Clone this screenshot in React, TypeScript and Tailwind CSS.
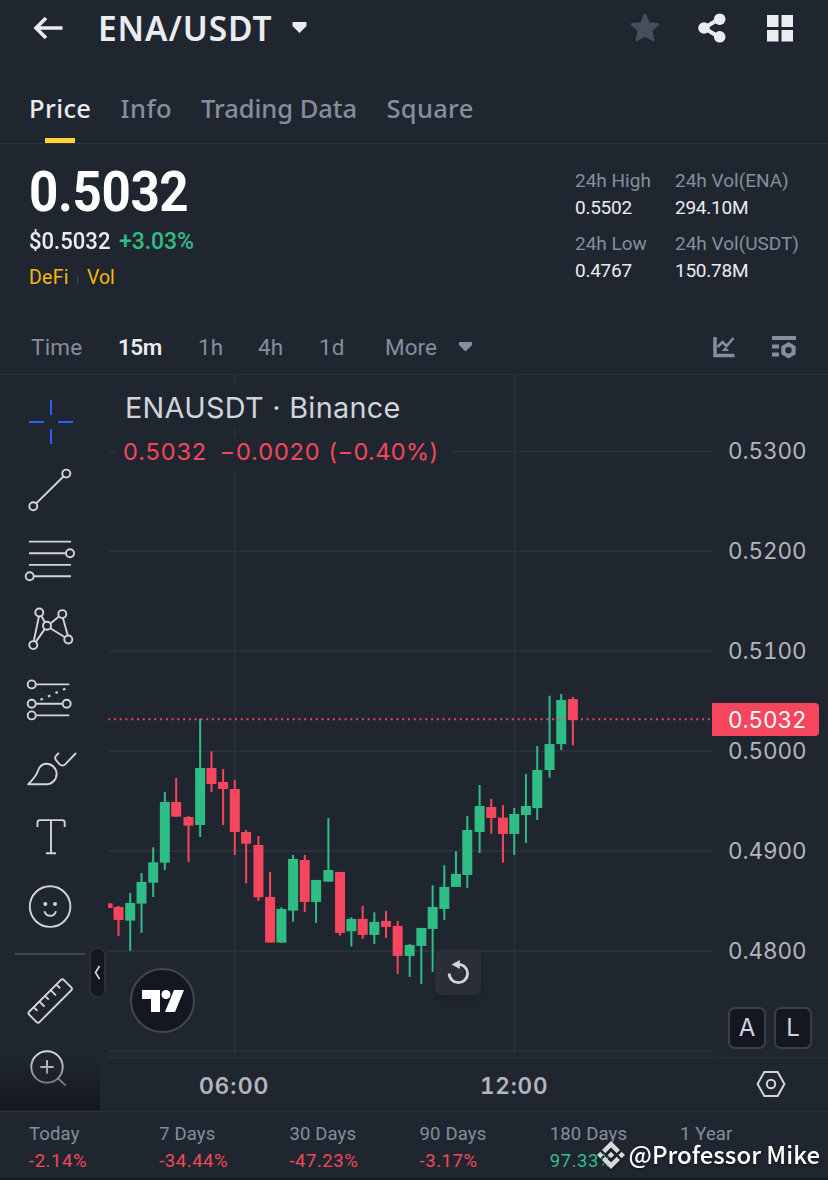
import React from 'react';
import clsx from 'clsx';

const UP = '#2ebd85';
const DOWN = '#f6465d';

const TABS = [
  { label: 'Price', width: 'w-[91.5px]', spacing: 'tracking-[0.4px]' },
  { label: 'Info', width: 'w-[80.5px]', spacing: 'tracking-[0.5px]' },
  { label: 'Trading Data', width: 'w-[185.5px]', spacing: 'tracking-[-0.05px]' },
  { label: 'Square', width: 'w-[100px]', spacing: 'tracking-[0.3px]' },
];

const STATS = [
  { label: '24h High', value: '0.5502' },
  { label: '24h Vol(ENA)', value: '294.10M' },
  { label: '24h Low', value: '0.4767' },
  { label: '24h Vol(USDT)', value: '150.78M' },
];

const INTERVALS = [
  { label: 'Time', width: 'w-[87px]' },
  { label: '15m', width: 'w-[80px]' },
  { label: '1h', width: 'w-[60px]' },
  { label: '4h', width: 'w-[61px]' },
  { label: '1d', width: 'w-[66px]' },
];

const PRICES = ['0.5300', '0.5200', '0.5100', '0.5000', '0.4900', '0.4800'];

const PERFORMANCE = [
  { label: 'Today', value: '-2.14%' },
  { label: '7 Days', value: '-34.44%' },
  { label: '30 Days', value: '-47.23%' },
  { label: '90 Days', value: '-3.17%' },
  { label: '180 Days', value: '97.33%' },
  { label: '1 Year', value: '--' },
];

// [center, high, body top, body bottom, low, rising], in thirds of a pixel
const CANDLES: [number, number, number, number, number, number][] = [
  [22, 640, 640, 654, 654, 0],
  [55, 648, 651, 690, 738, 0],
  [90, 609, 639, 692, 783, 1],
  [124, 549, 576, 641, 729, 1],
  [159, 472, 517, 578, 621, 1],
  [194, 306, 336, 518, 540, 1],
  [228, 264, 336, 380, 380, 0],
  [265, 378, 381, 407, 516, 0],
  [300, 86, 234, 405, 441, 1],
  [334, 184, 234, 282, 306, 0],
  [369, 237, 276, 297, 405, 0],
  [404, 270, 297, 426, 495, 0],
  [438, 420, 426, 461, 580, 0],
  [475, 438, 465, 622, 633, 0],
  [510, 546, 621, 758, 758, 0],
  [544, 652, 657, 758, 759, 1],
  [579, 495, 507, 662, 695, 1],
  [614, 495, 510, 636, 666, 0],
  [648, 570, 570, 636, 699, 1],
  [685, 384, 540, 575, 575, 1],
  [720, 546, 546, 729, 737, 0],
  [754, 682, 687, 724, 770, 1],
  [788, 648, 687, 735, 747, 0],
  [823, 667, 696, 735, 762, 1],
  [858, 663, 693, 711, 744, 0],
  [893, 693, 708, 798, 852, 0],
  [929, 762, 765, 798, 861, 1],
  [964, 714, 714, 768, 882, 1],
  [998, 586, 651, 717, 846, 1],
  [1033, 526, 591, 657, 690, 1],
  [1068, 484, 552, 591, 591, 1],
  [1102, 378, 420, 555, 594, 1],
  [1139, 285, 348, 426, 489, 1],
  [1174, 327, 351, 384, 431, 0],
  [1209, 345, 383, 432, 518, 0],
  [1243, 354, 372, 432, 495, 1],
  [1278, 252, 348, 375, 459, 1],
  [1312, 168, 240, 354, 390, 1],
  [1349, 17, 162, 240, 263, 1],
  [1384, 12, 30, 162, 180, 1],
  [1419, 21, 27, 90, 166, 0],
];

function Tool({ children, className }: { children: React.ReactNode; className?: string }) {
  return (
    <button className={clsx('flex h-[69.4px] w-full shrink-0 items-center pl-[23px]', className)}>
      <svg width="54" height="54" viewBox="0 0 54 54" fill="none" stroke="#d1d4dc" strokeWidth="1.9" strokeLinejoin="round">
        {children}
      </svg>
    </button>
  );
}

function Toolbar() {
  return (
    <aside className="relative h-[735px] w-[100px] shrink-0 overflow-hidden pt-[12.4px]">
      <Tool>
        <path stroke="#2962ff" d="M28 5v15M28 34v15M6 27h15M35 27h15" />
      </Tool>
      <Tool>
        <path d="M13.2 39.4 40.4 12.5" />
        <circle cx="10.3" cy="42.3" r="4" />
        <circle cx="43.3" cy="9.6" r="4" />
      </Tool>
      <Tool>
        <path d="M6 7.6h42M6 19.2h37M6 30.9h42M10.7 42.3H48" />
        <circle cx="47" cy="19.2" r="4" />
        <circle cx="6.7" cy="42.3" r="4" />
      </Tool>
      <Tool>
        <path d="M15.9 13.5 10.8 38.1M18.4 13l3.5 6.3M12.8 38.9l8.9-12.8M27.4 20.5l8.5-7M27.3 25.2l14.6 9M39.9 15.1l4.9 17.4" />
        <circle cx="16.3" cy="9.5" r="4" />
        <circle cx="39.3" cy="11.1" r="4" />
        <circle cx="24" cy="22.8" r="4" />
        <circle cx="10.3" cy="42.1" r="4" />
        <circle cx="45.3" cy="36.5" r="4" />
      </Tool>
      <Tool>
        <path d="M12.7 11.4h33.6M12.7 30.7h27M12.7 42.4h33.6" />
        <path d="M17.5 26.8 42.8 15.5" strokeWidth="2.2" strokeDasharray="2.6 5.6" />
        <circle cx="8.7" cy="11.4" r="4" />
        <circle cx="8.7" cy="30.7" r="4" />
        <circle cx="43.7" cy="30.7" r="4" />
        <circle cx="8.7" cy="42.4" r="4" />
      </Tool>
      <Tool>
        <path d="M5.2 42.3H23.3A10.3 10.3 0 0 0 23.3 21.7C17.8 21.7 16 25.5 14.8 29.2 13 34.5 9.2 38 5.2 42.3Z" />
        <path d="m35.9 11-2.4 2.2c-1.6 1.7-1.6 3.8-.1 5.5l3.3 3.6c1.6 1.6 3.9 1.6 5.5 0L53 11" />
      </Tool>
      <Tool>
        <path d="M14.5 16v-4.4q0-2.5 2.5-2.5h22.2q2.5 0 2.5 2.5V16M28 9v33M23 42.2h10" />
      </Tool>
      <Tool>
        <circle cx="27.1" cy="25.6" r="20.3" />
        <circle cx="22.3" cy="23" r="2" fill="#d1d4dc" stroke="none" />
        <circle cx="32" cy="23" r="2" fill="#d1d4dc" stroke="none" />
        <path d="M21.4 30.2c1 3 3 4.6 5.8 4.6s4.8-1.6 5.8-4.6" />
      </Tool>
      <div className="mt-[10px] ml-[15px] h-[2px] w-[70px] bg-[#434651]" />
      <Tool className="mt-[11.5px]">
        <g transform="translate(27.2 27) rotate(-45)">
          <rect x="-24.5" y="-7.3" width="49" height="14.6" rx="2" />
          <path d="M-16-7v5M-8-7v7M0-7v5M8-7v7M16-7v5" />
        </g>
      </Tool>
      <Tool>
        <circle cx="24" cy="24" r="15.7" />
        <path d="M24 17.3v13.4M17.3 24h13.4M35.3 35.6l7.5 7" />
      </Tool>
      <div className="absolute inset-x-0 bottom-0 h-[52px] bg-linear-to-b from-transparent to-[#131722]" />
    </aside>
  );
}

function Plot() {
  return (
    <svg width="612" height="682" viewBox="100 375 612 682" className="block">
      <path
        d="M108 551.5h604M108 651.5h604M108 751.5h604M108 851.5h604M108 951.5h604M108 1051.5h604M108 451.5h8M451 451.5h261M234.5 375v10M234.5 429v8M234.5 470v586M514.5 375v681"
        stroke="#2c323c"
        strokeWidth="1.6"
        fill="none"
      />
      <svg x="108" y="375" width="604" height="681" viewBox="108 375 604 681">
        <g transform="translate(100 690.3) scale(0.33333)">
          {CANDLES.map(([x, high, top, bottom, low, rising]) => (
            <g key={x} fill={rising ? UP : DOWN}>
              <rect x={x - 3} y={high} width="6" height={low - high} />
              <rect x={x - 15} y={top} width="30" height={bottom - top} />
            </g>
          ))}
        </g>
        <path d="M108 719.5h604" stroke={DOWN} strokeWidth="1.8" strokeDasharray="1.9 3.87" />
      </svg>
    </svg>
  );
}

function Header() {
  return (
    <header className="flex h-[56px] items-center pl-[33px] pr-[34px]">
      <svg width="30" height="24" viewBox="0 0 30 24" fill="none" stroke="#eaecef" strokeWidth="3.6">
        <path d="M2.5 12H29.5M13 2 3 12l10 10" />
      </svg>
      <h1 className="ml-[35px] mt-[2px] w-[194px] whitespace-nowrap font-['Noto_Sans'] text-[33.5px] font-semibold leading-none tracking-[0.9px] text-[#eaecef]">
        ENA/USDT
      </h1>
      <svg width="15" height="12" viewBox="0 0 15 12" fill="#eaecef">
        <path d="M.5 0h14v4L7.5 11 .5 4z" />
      </svg>
      <div className="ml-auto flex items-center">
        <svg width="30" height="30" viewBox="0 0 30 30" fill="#474f5b" stroke="#474f5b" strokeWidth="2.5" strokeLinejoin="round">
          <path d="m15 2 3.6 8.5 9.4.8-7 6 2.2 9.700-8.200-4.800L6.800 27 9 17.300l-7-6 9.400-.8z" />
        </svg>
        <svg className="ml-[37px]" width="30" height="30" viewBox="0 0 30 30" fill="#eaecef">
          <path d="M22 6 7 15l15 9" fill="none" stroke="#eaecef" strokeWidth="4" />
          <circle cx="22.7" cy="6.2" r="5.8" />
          <circle cx="7" cy="15" r="5.8" />
          <circle cx="22.7" cy="23.8" r="5.8" />
        </svg>
        <svg className="ml-[39px]" width="28" height="28" viewBox="0 0 28 28" fill="#eaecef">
          <path d="M1 1h11.5v12H1zM15.5 1H27v12H15.5zM1 16h11.5v11.5H1zM15.5 16H27v11.5H15.5z" />
        </svg>
      </div>
    </header>
  );
}

export default function App() {
  return (
    <main className="flex h-[1180px] w-[828px] flex-col overflow-hidden bg-[#202630] font-['Roboto',sans-serif] text-[#eaecef]">
      <Header />

      <nav className="flex h-[88px] border-b border-[#2c333e] pl-[29px] font-['Noto_Sans',sans-serif] text-[25.5px] font-medium leading-none text-[#848e9c]">
        {TABS.map((tab, i) => (
          <div key={tab.label} className={clsx('relative shrink-0 whitespace-nowrap pt-[39.5px]', tab.width, tab.spacing, i === 0 && 'text-[#eaecef]')}>
            {tab.label}
            {i === 0 && <span className="absolute bottom-0 left-[16px] h-[5px] w-[30px] bg-[#fcd535]" />}
          </div>
        ))}
      </nav>

      <section className="flex h-[176px] shrink-0 justify-between pl-[29px] pt-[20px]">
        <div>
          <div className="h-[58px] w-[170px] origin-left scale-x-[0.93] text-[55px] font-bold leading-[56px] tracking-[-0.4px] text-white">0.5032</div>
          <div className="mt-[6px] flex gap-[9px] text-[23px] font-medium leading-[28px]">
            <span className="w-[81px] origin-left scale-x-[0.96]">$0.5032</span>
            <span className="tracking-[-0.1px] text-[#2ebd85]">+3.03%</span>
          </div>
          <div className="mt-[9px] flex items-center text-[19.5px] leading-[26px] text-[#f0b90b]">
            <span className="w-[48px] tracking-[0.3px]">DeFi</span>
            <span className="mr-[9px] mt-1 h-2 w-px bg-[#474d57]" />
            <span>Vol</span>
          </div>
        </div>
        <dl className="mt-[3.5px] grid h-[127px] w-[253px] grid-cols-[100px_1fr] grid-rows-2">
          {STATS.map((stat) => (
            <div key={stat.label} className="whitespace-nowrap">
              <dt className="text-[19px] leading-[26px] text-[#848e9c]">{stat.label}</dt>
              <dd className="text-[19px] leading-[28px] tracking-[-0.25px]">{stat.value}</dd>
            </div>
          ))}
        </dl>
      </section>

      <section className="flex h-[55px] shrink-0 items-center border-b border-[#2c333e] pl-[31px] pr-[32px] text-[22.5px] text-[#848e9c]">
        {INTERVALS.map(({ label, width }) => (
          <span key={label} className={clsx('pt-[2px]', width, label === '15m' ? 'font-semibold tracking-[-0.5px] text-[#eaecef]' : 'tracking-[0.2px]')}>
            {label}
          </span>
        ))}
        <span className="w-[74px] pt-[2px]">More</span>
        <svg width="13" height="10" viewBox="0 0 13 10" fill="#848e9c">
          <path d="M0 0h13v3L6.5 9.5 0 3z" />
        </svg>
        <svg className="ml-auto" width="22" height="22" viewBox="0 0 22 22" fill="none" stroke="#848e9c">
          <path d="M2 1v18.5h19.5" strokeWidth="3.6" />
          <path d="m4.5 11 5-5 4 4L20.5 2" strokeWidth="2.6" />
          <path d="m8.5 15 4-4 3.5 4z" fill="#848e9c" stroke="none" />
        </svg>
        <svg className="ml-[37px]" width="24" height="24" viewBox="0 0 24 24" fill="#848e9c">
          <path d="M0 1h24v4H0zM0 9.5h7v4H0zM0 17.5h7v4H0z" />
          <path fillRule="evenodd" d="m16.5 7 7.2 4.2v8.1L16.5 23.5l-7.200-4.200v-8.100zM16.500 12a3.200 3.200 0 1 0 0 6.400 3.200 3.200 0 0 0 0-6.400z" />
        </svg>
      </section>

      <section className="relative flex h-[736.5px] shrink-0 border-b border-[#2c323c]">
        <Toolbar />
        <div className="flex w-[612px] flex-col">
          <Plot />
          <div className="ml-[8px] flex h-[54px] items-center border-t border-[#2c323c] pt-[4px] font-['Inter',sans-serif] text-[22.5px] font-semibold leading-none tracking-[0.8px] text-[#b2b5be]">
            <span className="ml-[91px] w-[281px]">06:00</span>
            <span className="tabular-nums">12:00</span>
          </div>
        </div>
        <div className="flex flex-1 flex-col font-['Inter',sans-serif] text-[22.5px] tabular-nums tracking-[-0.1px] text-[#b2b5be]">
          <div className="h-[26px] shrink-0" />
          {PRICES.map((price) => (
            <span key={price} className="flex h-[100px] shrink-0 items-center pl-[16px]">
              {price}
            </span>
          ))}
          <div className="mt-[6px] flex gap-[8px] pl-[16px] text-[24px] tracking-normal text-[#d1d4dc]">
            <button className="h-[42px] w-[38px] rounded-[7px] border-2 border-[#3a3e49] bg-[#131722]">A</button>
            <button className="h-[42px] w-[38px] rounded-[7px] border-2 border-[#3a3e49] bg-[#131722]">L</button>
          </div>
          <div className="ml-[2px] mt-[8px] flex h-[54px] items-center border-t border-[#2c323c] pl-[42px]">
            <svg width="30" height="28" viewBox="0 0 30 28" fill="none" stroke="#d1d4dc" strokeWidth="2">
              <path d="M8.3 2h13.4l6.7 12-6.7 12H8.300L1.600 14z" />
              <circle cx="15" cy="14" r="4.2" />
            </svg>
          </div>
        </div>

        <div className="absolute left-[125px] top-[16px] font-['Inter',sans-serif]">
          <div className="whitespace-nowrap text-[28.8px] leading-[34px] tracking-[0.3px] text-[#d1d4dc]">ENAUSDT · Binance</div>
          <div className="-ml-[2px] mt-[10px] flex whitespace-nowrap text-[23.5px] leading-[33px] tracking-[0.65px] text-[#f6465d]">
            <span className="w-[96.5px] tracking-[0.9px]">0.5032</span>
            <span className="w-[109px] tracking-[0.9px]">−0.0020</span>
            <span className="tracking-[0.4px]">(−0.40%)</span>
          </div>
        </div>
        <div className="absolute left-[712px] top-[328px] flex h-[33px] w-[107px] items-center rounded-r-[4px] bg-[#f6465d] pl-[16px] font-['Inter',sans-serif] text-[22.5px] tabular-nums tracking-[-0.1px] text-white">
          0.5032
        </div>
        <button className="absolute left-[89px] top-[572px] flex h-[51px] w-[17px] items-center justify-center rounded-[8px] border-2 border-[#2a2e39] bg-[#131722]">
          <svg width="7" height="15" viewBox="0 0 7 15" fill="none" stroke="#d1d4dc" strokeWidth="1.7">
            <path d="M5.5 1 1.5 7.5l4 6.5" />
          </svg>
        </button>
        <div className="absolute left-[130px] top-[593px] flex h-[65px] w-[65px] items-center justify-center rounded-full border-2 border-[#434651] bg-[#131722]">
          <svg width="42" height="22" viewBox="0 0 42 22" fill="#fff">
            <path d="M0 0h18v22H9V9H0z" />
            <circle cx="24" cy="4.5" r="4.5" />
            <path d="M32 0h10l-9 22H23z" />
          </svg>
        </div>
        <button className="absolute left-[435px] top-[574px] flex h-[46px] w-[46px] items-center justify-center rounded-[7px] bg-[#2a2e39] shadow-md">
          <svg width="24" height="26" viewBox="0 0 24 26" fill="none" stroke="#d1d4dc" strokeWidth="2.8">
            <path d="M3.2 14.5A9.2 9.2 0 1 0 12.4 5.3" />
            <path d="M5.5 5.5 13.8 1v9z" fill="#d1d4dc" stroke="none" />
          </svg>
        </button>
      </section>

      <footer className="relative flex h-[66.5px] shrink-0 pl-[29px] pt-[9.5px]">
        {PERFORMANCE.map(({ label, value }) => (
          <div key={label} className="w-[130.2px] shrink-0 whitespace-nowrap">
            <div className="text-[18.5px] leading-[27px] tracking-[0.15px] text-[#848e9c]">{label}</div>
            <div className={clsx('text-[18.5px] leading-[26px] tracking-[0.55px]', value.startsWith('--') ? 'text-[#848e9c]' : value.startsWith('-') ? 'text-[#f6465d]' : 'text-[#2ebd85]')}>
              {value}
            </div>
          </div>
        ))}
        <div className="absolute right-[8px] top-[27px] flex items-center gap-[4px] text-white drop-shadow-[0_1px_1px_rgba(0,0,0,0.5)]">
          <svg width="28" height="28" viewBox="0 0 28 28" fill="#d9d9d9">
            <path d="m14 0 9 9-3.3 3.3L14 6.6l-5.7 5.7L5 9zM14 28l-9-9 3.3-3.3 5.7 5.7 5.7-5.7L23 19zM3.3 10.7 6.6 14l-3.3 3.3L0 14zM24.7 10.7 28 14l-3.3 3.3-3.3-3.3zM14 10.7l3.3 3.3-3.3 3.3-3.3-3.3z" />
          </svg>
          <span className="-mt-[2px] whitespace-nowrap font-['Noto_Sans_CJK_SC',sans-serif] text-[24px] font-medium leading-[34px]">@Professor Mike</span>
        </div>
      </footer>
      <div className="h-[2px] shrink-0 bg-[#171b22]" />
    </main>
  );
}
